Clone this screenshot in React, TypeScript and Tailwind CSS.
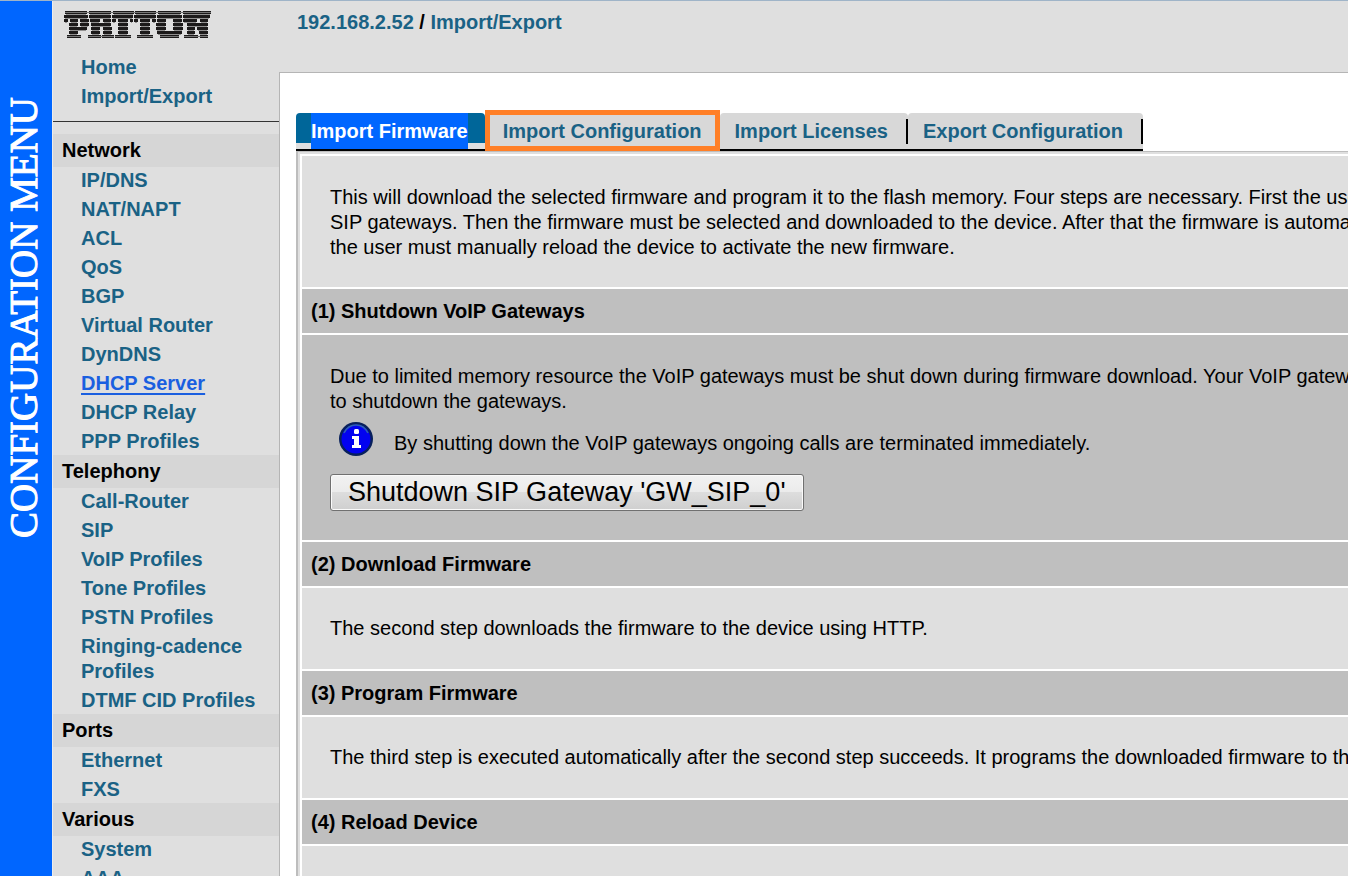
import type { ReactNode } from 'react';

const menu = [
  {
    title: 'Network',
    items: ['IP/DNS', 'NAT/NAPT', 'ACL', 'QoS', 'BGP', 'Virtual Router', 'DynDNS', 'DHCP Server', 'DHCP Relay', 'PPP Profiles'],
  },
  {
    title: 'Telephony',
    items: ['Call-Router', 'SIP', 'VoIP Profiles', 'Tone Profiles', 'PSTN Profiles', 'Ringing-cadence Profiles', 'DTMF CID Profiles'],
  },
  { title: 'Ports', items: ['Ethernet', 'FXS'] },
  { title: 'Various', items: ['System', 'AAA'] },
];

// dark runs of each stripe, top to bottom, as [from, to]
const stripes = [
  [[1, 23], [25, 47], [49, 70], [71, 92], [94, 117], [119, 147]],
  [[0, 24], [25, 47], [48, 69], [70, 92], [93, 118], [119, 146]],
  [[0, 4], [6, 14], [16, 25], [26, 36], [39, 47], [48, 52], [54, 64], [66, 69], [70, 74], [76, 86], [88, 92], [93, 102], [109, 118], [119, 133], [136, 144]],
  [[5, 14], [16, 25], [27, 47], [54, 64], [76, 86], [92, 102], [109, 119], [123, 144]],
  [[5, 23], [27, 36], [39, 48], [54, 64], [76, 86], [92, 102], [109, 119], [123, 131], [133, 144]],
  [[5, 14], [27, 36], [39, 48], [54, 64], [76, 86], [93, 118], [123, 131], [135, 144]],
  [[3, 17], [24, 37], [38, 50], [51, 67], [73, 89], [96, 115], [120, 134], [136, 144]],
];

function Logo() {
  return (
    <svg width="148" height="28" viewBox="0 0 148 28" className="block" role="img" aria-label="Patton">
      {stripes.map((runs, row) =>
        runs.map(([from, to]) => (
          <g key={`${row}-${from}`} fill="#1c1a1a">
            <rect x={from} y={row * 4} width={to - from} height="3" />
            {row < 6 && <rect x={from + 1} y={row * 4 + 3} width={to - from - 2} height="1" opacity="0.4" />}
          </g>
        )),
      )}
      <path d="M1 1.500H147M3 25.500H17M24 25.500H50M51 25.500H67M73 25.500H89M96 25.500H115M120 25.500H144" stroke="#777" strokeWidth="1" />
    </svg>
  );
}

function InfoIcon() {
  return (
    <svg width="36" height="36" viewBox="0 0 36 36" className="shrink-0" aria-hidden="true">
      <circle cx="18" cy="18" r="17" fill="#08205c" />
      <circle cx="18" cy="18" r="14.5" fill="#0202f0" />
      <path d="M6 12Q10 4 18 4Q26 4 30 12" fill="none" stroke="#2f62b0" strokeWidth="1.5" />
      <rect x="16" y="8" width="5" height="5" rx="1.5" fill="#fff" />
      <path d="M14 15h7v9h2v3h-9v-3h2v-6h-2z" fill="#fff" />
    </svg>
  );
}

function Tab({ href, children }: { href: string; children: ReactNode }) {
  return (
    <a href={href} className="flex h-[38px] items-start rounded-t border-b-2 border-black bg-[#d8d8d8] pl-[15px] pt-[6px]">
      {children}
      <span className="ml-[18px] h-[25px] w-[2px] bg-black" />
    </a>
  );
}

function Step({ title, className, children }: { title: string; className: string; children?: ReactNode }) {
  return (
    <>
      <h2 className="bg-[#bfbfbf] px-[9px] pb-[9px] pt-[10px] font-bold">{title}</h2>
      <div className={`px-7 ${className}`}>{children}</div>
    </>
  );
}

export default function App() {
  return (
    <div className="flex h-screen overflow-hidden border-t border-[#9fb4c8] bg-[#dfdfdf] font-['Liberation_Sans',Arial,sans-serif] text-xl leading-[25px] text-black">
      <div className="flex w-[52px] shrink-0 justify-center bg-[#0066ff] pr-1 pt-24">
        <div className="rotate-180 self-start whitespace-nowrap font-['Liberation_Serif',serif] text-[39px] leading-[48px] text-white [-webkit-text-stroke:1px_white] [writing-mode:vertical-rl]">
          CONFIGURATION MENU
        </div>
      </div>

      <nav className="w-[227px] shrink-0 border-l border-[#ececec] font-bold text-[#1a6285]">
        <div className="border-b border-[#333] pb-3 pl-[11px] pt-[10px]">
          <Logo />
          <ul className="mt-4 flex flex-col gap-1 pl-[17px]">
            <li><a href="#home">Home</a></li>
            <li><a href="#import-export">Import/Export</a></li>
          </ul>
        </div>
        <div className="pt-3">
          {menu.map((group) => (
            <section key={group.title}>
              <h2 className="bg-[#d6d6d6] px-[9px] py-1 text-black">{group.title}</h2>
              <ul className="flex flex-col gap-1 py-px pl-7 pr-4">
                {group.items.map((item) => (
                  <li key={item}>
                    <a
                      href={`#${item}`}
                      className={item === 'DHCP Server' ? 'text-[#1a5fe0] underline decoration-2 underline-offset-3' : ''}
                    >
                      {item}
                    </a>
                  </li>
                ))}
              </ul>
            </section>
          ))}
        </div>
      </nav>

      <div className="flex min-w-0 flex-1 flex-col">
        <header className="px-[18px] pb-[37px] pt-[9px] font-bold">
          <a href="#device" className="text-[#1a6285]">192.168.2.52</a> / <a href="#import-export" className="text-[#1a6285]">Import/Export</a>
        </header>

        <main className="flex min-h-0 flex-1 flex-col overflow-hidden whitespace-nowrap border-l border-t border-[#b5b5b5] bg-white pl-4 pt-[37px]">
          <div className="flex items-end font-bold text-[#1a6285]">
            <a
              href="#firmware"
              className="flex h-[38px] rounded-t border-b-2 border-black bg-[linear-gradient(#006699_30px,#dfdfdf_30px)] pl-[15px] pr-[17px] text-white"
            >
              <span className="bg-[#0066ff] pt-[6px]">Import Firmware</span>
            </a>
            <a href="#configuration" className="h-[41px] border-[5px] border-[#ff7f27] bg-[#d8d8d8] px-[13px] leading-8">
              Import Configuration
            </a>
            <Tab href="#licenses">Import Licenses</Tab>
            <Tab href="#export">Export Configuration</Tab>
          </div>

          <div className="flex flex-1 flex-col border-l-2 border-t border-[#bdbdbd] bg-white">
            <div className="flex flex-1 flex-col gap-[2px] border-l-2 border-t-2 border-[#dfdfdf] pl-[2px] pt-[2px]">
              <p className="bg-[#dfdfdf] px-7 pb-[27px] pt-[29px]">
                This will download the selected firmware and program it to the flash memory. Four steps are necessary. First the user must shut down all
                <br />
                SIP gateways. Then the firmware must be selected and downloaded to the device. After that the firmware is automatically programmed and
                <br />
                the user must manually reload the device to activate the new firmware.
              </p>

              <Step title="(1) Shutdown VoIP Gateways" className="bg-[#bfbfbf] pb-[29px] pt-[29px]">
                <p>
                  Due to limited memory resource the VoIP gateways must be shut down during firmware download. Your VoIP gateways are running, click
                  <br />
                  to shutdown the gateways.
                </p>
                <div className="mt-[7px] flex items-center gap-5 pl-2">
                  <InfoIcon />
                  <p className="pt-2">By shutting down the VoIP gateways ongoing calls are terminated immediately.</p>
                </div>
                <button
                  type="button"
                  className="mt-[17px] block rounded-[3px] border border-[#707070] bg-[linear-gradient(#f2f2f2,#ebebeb_50%,#dddddd_50%,#cfcfcf)] px-[17px] text-[27px] leading-[35px] shadow-[inset_0_0_0_1px_#fafafa]"
                >
                  Shutdown SIP Gateway 'GW_SIP_0'
                </button>
              </Step>

              <Step title="(2) Download Firmware" className="bg-[#dfdfdf] py-7">
                <p>The second step downloads the firmware to the device using HTTP.</p>
              </Step>

              <Step title="(3) Program Firmware" className="bg-[#dfdfdf] py-7">
                <p>The third step is executed automatically after the second step succeeds. It programs the downloaded firmware to the flash memory.</p>
              </Step>

              <Step title="(4) Reload Device" className="flex-1 bg-[#dfdfdf]" />
            </div>
          </div>
        </main>
      </div>
    </div>
  );
}
